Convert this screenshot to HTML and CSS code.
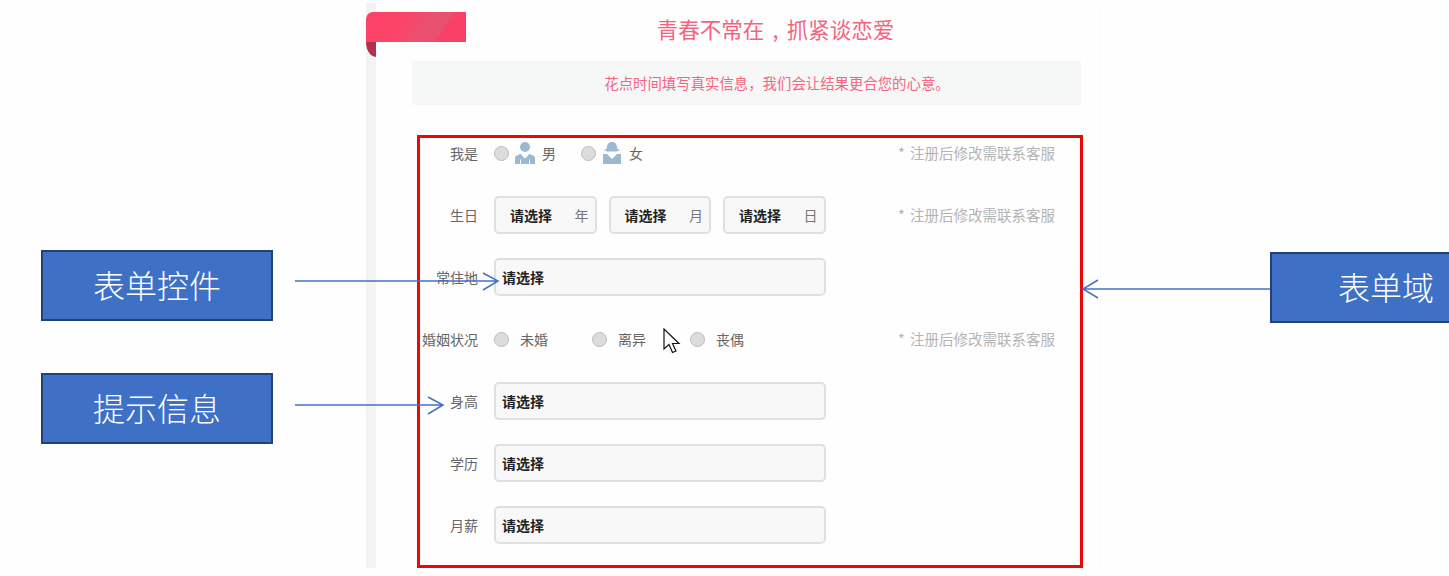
FILE: index.html
```html
<!DOCTYPE html>
<html lang="zh-CN">
<head>
    <meta charset="UTF-8">
    <meta name="viewport" content="width=device-width, initial-scale=1.0">
    <title>表单域</title>
    <link rel="stylesheet" href="styles.css">
</head>
<body>
    <div class="sheet">
        <header class="sheet-head">
            <div class="ribbon"></div>
            <h1>青春不常在 , 抓紧谈恋爱</h1>
        </header>
        <p class="note">花点时间填写真实信息，我们会让结果更合您的心意。</p>

        <form class="reg-form">
            <div class="row row-first">
                <span class="row-label">我是</span>
                <label class="choice choice-sex">
                    <input type="radio" name="sex">
                    <svg class="sex-icon" viewBox="0 0 20 22" aria-hidden="true">
                        <circle cx="10" cy="5" r="5"/>
                        <path fill-rule="evenodd" d="M0 22v-6c0-2 3-3.500 6-4l3 4h2l3-4c3 .5 6 2 6 4v6zM5 17.500h1V22H5zM14 17.500h1V22h-1z"/>
                    </svg>
                    男
                </label>
                <label class="choice choice-sex">
                    <input type="radio" name="sex">
                    <svg class="sex-icon" viewBox="0 0 20 22" aria-hidden="true">
                        <path d="M10 0c3.500 0 5 2.500 5 5.500 0 1 1 2 3 2.500l-3 1.500H5L2 8c2-.5 3-1.500 3-2.500C5 2.500 6.500 0 10 0z"/>
                        <path d="M1 12h4l5 5 5-5h4v10H1z"/>
                    </svg>
                    女
                </label>
                <span class="hint">* 注册后修改需联系客服</span>
            </div>

            <div class="row">
                <span class="row-label">生日</span>
                <div class="date-group">
                    <div class="picker picker-date"><b>请选择</b><span>年</span></div>
                    <div class="picker picker-date"><b>请选择</b><span>月</span></div>
                    <div class="picker picker-date"><b>请选择</b><span>日</span></div>
                </div>
                <span class="hint">* 注册后修改需联系客服</span>
            </div>

            <div class="row">
                <span class="row-label">常住地</span>
                <div class="picker"><b>请选择</b></div>
            </div>

            <div class="row">
                <span class="row-label">婚姻状况</span>
                <label class="choice choice-marry"><input type="radio" name="marry">未婚</label>
                <label class="choice choice-marry"><input type="radio" name="marry">离异</label>
                <label class="choice choice-marry"><input type="radio" name="marry">丧偶</label>
                <span class="hint">* 注册后修改需联系客服</span>
            </div>

            <div class="row">
                <span class="row-label">身高</span>
                <div class="picker"><b>请选择</b></div>
            </div>

            <div class="row">
                <span class="row-label">学历</span>
                <div class="picker"><b>请选择</b></div>
            </div>

            <div class="row">
                <span class="row-label">月薪</span>
                <div class="picker"><b>请选择</b></div>
            </div>
        </form>
    </div>

    <!-- 标注层 -->
    <div class="callout callout-control">表单控件</div>
    <div class="callout callout-hint">提示信息</div>
    <div class="callout callout-field">表单域</div>

    <svg class="arrows" viewBox="0 0 1449 576" aria-hidden="true">
        <path d="M295 281H497M483 273l15 8-15 9"/>
        <path d="M295 405H443M428 397l15 8-15 9"/>
        <path d="M1270 289H1084M1098 280l-15 9 15 9"/>
    </svg>

    <svg class="cursor" viewBox="0 0 18 26" aria-hidden="true">
        <path d="M1 1v20l5-4.500 3.500 8 3.500-1.500-3.500-7.500H16z"/>
    </svg>
</body>
</html>
```

FILE: styles.css
```css
* {
    box-sizing: border-box;
}

html, body {
    height: 100%;
}

body {
    margin: 0;
    position: relative;
    overflow: hidden;
    background: #fefefe;
    font-family: "Noto Sans CJK SC", "Liberation Sans", sans-serif;
    font-size: 14px;
    color: #666;
}

.sheet {
    width: 735px;
    height: 565px;
    margin: 3px 0 0 366px;
    padding-top: 9px;
    border-left: 10px solid #f2f3f3;
    border-right: 1px solid #fbfbfb;
}

.sheet-head {
    display: flex;
    height: 30px;
}

.ribbon {
    position: relative;
    width: 100px;
    height: 30px;
    margin-left: -10px;
    border-top-left-radius: 7px;
    background: linear-gradient(125deg, #fd4267 0, #fb4468 36%, #e9516f 58%, #e94f6e 72%, #fb4065 76%);
}

.ribbon::after {
    content: "";
    position: absolute;
    left: 0;
    top: 30px;
    width: 10px;
    height: 15px;
    border-bottom-left-radius: 10px 15px;
    background: #b42f50;
}

.sheet-head h1 {
    flex: 1;
    margin: 2px 15px 0 0;
    font-size: 21.5px;
    font-weight: 400;
    line-height: 30px;
    word-spacing: 3.500px;
    text-align: center;
    color: #f4647f;
}

.note {
    width: 669px;
    height: 44px;
    margin: 19px 0 0 36px;
    padding-left: 61px;
    background: #f6f7f7;
    line-height: 44px;
    text-align: center;
    font-size: 14.4px;
    color: #f4667f;
}

.reg-form {
    display: flex;
    flex-direction: column;
    gap: 24px;
    width: 666px;
    height: 433px;
    margin: 30px 0 0 41px;
    padding: 4px 25px 0 0;
    border: 3px solid #ee0707;
}

.row {
    display: flex;
    align-items: center;
    height: 38px;
}

.row-first {
    height: 22px;
    margin-bottom: 8px;
}

.row-label {
    flex: none;
    width: 58px;
    margin-right: 16px;
    text-align: right;
    white-space: nowrap;
}

.hint {
    margin-left: auto;
    margin-top: -1px;
    font-size: 14.5px;
    word-spacing: 2px;
    color: #b4b4b4;
    white-space: nowrap;
}

.picker {
    display: flex;
    align-items: center;
    justify-content: space-between;
    width: 331.500px;
    height: 38px;
    padding: 0 6px;
    border: 2px solid #e0e0e0;
    border-radius: 5px;
    background: #f8f8f8;
}

.picker b {
    font-weight: 700;
    color: #222;
}

.picker span {
    color: #777;
}

.date-group {
    display: flex;
    gap: 12px;
}

.picker-date {
    width: 102.500px;
    padding-left: 14px;
    padding-right: 6px;
}

.choice {
    display: flex;
    align-items: center;
    white-space: nowrap;
}

.choice input {
    appearance: none;
    flex: none;
    width: 15px;
    height: 15px;
    margin: 0;
    border: 1px solid #bcbcbc;
    border-radius: 50%;
    background: #dcdcdc;
}

.choice-sex {
    width: 87px;
}

.sex-icon {
    width: 20px;
    height: 22px;
    margin: 0 7px 0 6px;
    fill: #9cb8d3;
}

.choice-marry {
    width: 98px;
}

.choice-marry input {
    margin-right: 11px;
}

.callout {
    position: absolute;
    display: flex;
    align-items: center;
    justify-content: center;
    width: 232px;
    height: 71px;
    padding-bottom: 3px;
    border: 2px solid #1f4279;
    background: #3e71c5;
    font-size: 32px;
    font-weight: 300;
    color: #fff;
}

.callout-control {
    left: 41px;
    top: 250px;
}

.callout-hint {
    left: 41px;
    top: 373px;
}

.callout-field {
    left: 1270px;
    top: 252px;
}

.arrows {
    position: absolute;
    left: 0;
    top: 0;
    width: 1449px;
    height: 576px;
    fill: none;
    stroke: #4472c4;
    stroke-width: 1.5;
    pointer-events: none;
}

.cursor {
    position: absolute;
    left: 663px;
    top: 328px;
    width: 18px;
    height: 26px;
    fill: #fff;
    stroke: #111;
    stroke-width: 1.2;
}
```
